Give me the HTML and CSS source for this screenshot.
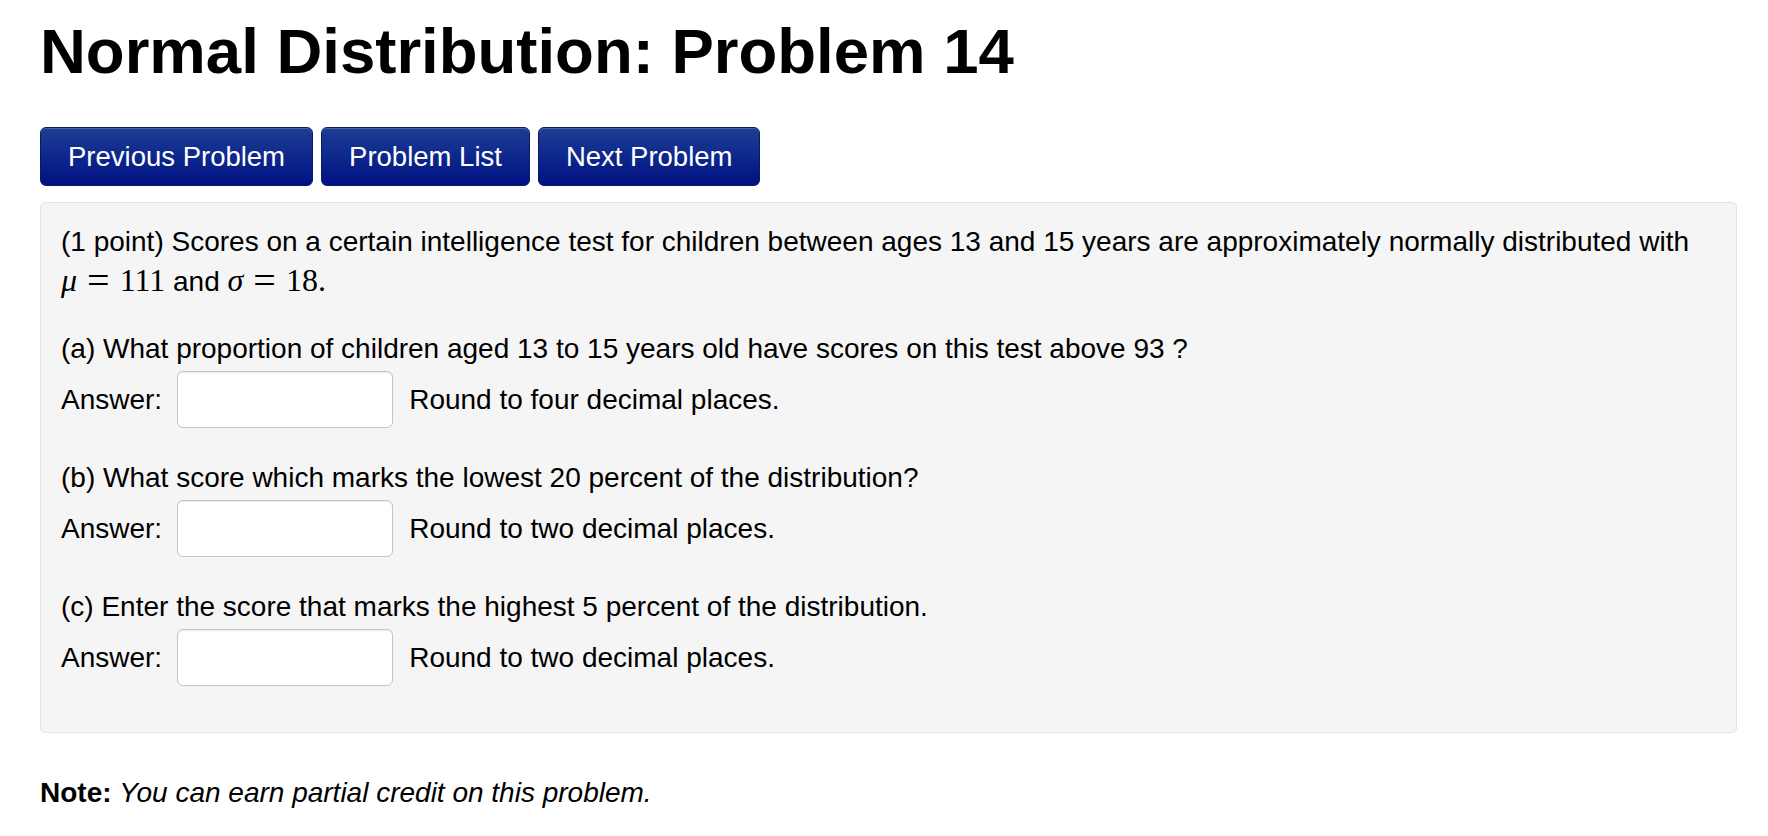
FILE: index.html
```html
<!DOCTYPE html>
<html lang="en">

<head>
    <meta charset="UTF-8">
    <meta name="viewport" content="width=device-width, initial-scale=1.0">
    <title>Normal Distribution: Problem 14</title>
    <link rel="stylesheet" href="styles.css">
</head>

<body>
    <div class="page">
        <h1 class="title">Normal Distribution: Problem 14</h1>

        <div class="nav">
            <button type="button" class="nav-btn">Previous Problem</button>
            <button type="button" class="nav-btn">Problem List</button>
            <button type="button" class="nav-btn">Next Problem</button>
        </div>

        <div class="problem">
            <div class="intro">
                (1 point) Scores on a certain intelligence test for children between ages 13 and 15 years are approximately normally distributed with<br>
                <span class="math"><i>&mu;</i><span class="eq">=</span>111</span> and <span class="math"><i>&sigma;</i><span class="eq">=</span>18.</span>
            </div>

            <!-- part a -->
            <div class="part">
                <div class="question">(a) What proportion of children aged 13 to 15 years old have scores on this test above 93 ?</div>
                <div class="answer-row">
                    <span>Answer:</span>
                    <input type="text" class="answer" id="answerA">
                    <span class="hint">Round to four decimal places.</span>
                </div>
            </div>

            <!-- part b -->
            <div class="part">
                <div class="question">(b) What score which marks the lowest 20 percent of the distribution?</div>
                <div class="answer-row">
                    <span>Answer:</span>
                    <input type="text" class="answer" id="answerB">
                    <span class="hint">Round to two decimal places.</span>
                </div>
            </div>

            <!-- part c -->
            <div class="part">
                <div class="question">(c) Enter the score that marks the highest 5 percent of the distribution.</div>
                <div class="answer-row">
                    <span>Answer:</span>
                    <input type="text" class="answer" id="answerC">
                    <span class="hint">Round to two decimal places.</span>
                </div>
            </div>
        </div>

        <div class="note"><strong>Note:</strong> <em>You can earn partial credit on this problem.</em></div>
    </div>
</body>

</html>
```

FILE: styles.css
```css
* {
    margin: 0;
    padding: 0;
    box-sizing: border-box;
}

body {
    background-color: #ffffff;
    color: #000000;
    font-family: "Liberation Sans", Arial, Helvetica, sans-serif;
    font-size: 28px;
    line-height: 38px;
}

.page {
    padding: 15px 31px 0 40px;
}

.title {
    font-size: 63.5px;
    font-weight: 700;
    line-height: 72px;
}

/* Navigation buttons */
.nav {
    display: flex;
    gap: 8px;
    margin-top: 40px;
}

.nav-btn {
    height: 59px;
    padding: 0 27px;
    font-family: "Liberation Sans", Arial, Helvetica, sans-serif;
    font-size: 27.5px;
    line-height: 57px;
    color: #ffffff;
    background: linear-gradient(to bottom, #1c3d94, #001283);
    border: 1px solid #0a1a66;
    border-radius: 6px;
    box-shadow: inset 0 1px 0 rgba(255, 255, 255, 0.2);
    cursor: pointer;
}

.nav-btn:hover {
    background: #001283;
}

/* Problem box */
.problem {
    margin-top: 16px;
    padding: 20px 20px 46px 20px;
    background-color: #f5f5f5;
    border: 1px solid #e3e3e3;
    border-radius: 5px;
}

.math {
    font-family: "Liberation Serif", "Times New Roman", serif;
    font-size: 32px;
    line-height: 38px;
}

.math i {
    font-style: italic;
}

.eq {
    padding: 0 10px;
    font-size: 40px;
    line-height: 1;
    vertical-align: -3px;
}

.part {
    margin-top: 31px;
}

.intro + .part {
    margin-top: 29px;
}

.answer-row {
    display: flex;
    align-items: center;
    margin-top: 3px;
}

.answer {
    width: 216px;
    height: 57px;
    margin-left: 15px;
    padding: 0 10px;
    font-size: 28px;
    background-color: #ffffff;
    border: 1px solid #c4c4c4;
    border-radius: 6px;
    box-shadow: inset 0 1px 1px rgba(0, 0, 0, 0.075);
}

.answer:focus {
    border-color: #66afe9;
    outline: none;
}

.hint {
    margin-left: 16px;
}

.note {
    margin-top: 41px;
}
```
